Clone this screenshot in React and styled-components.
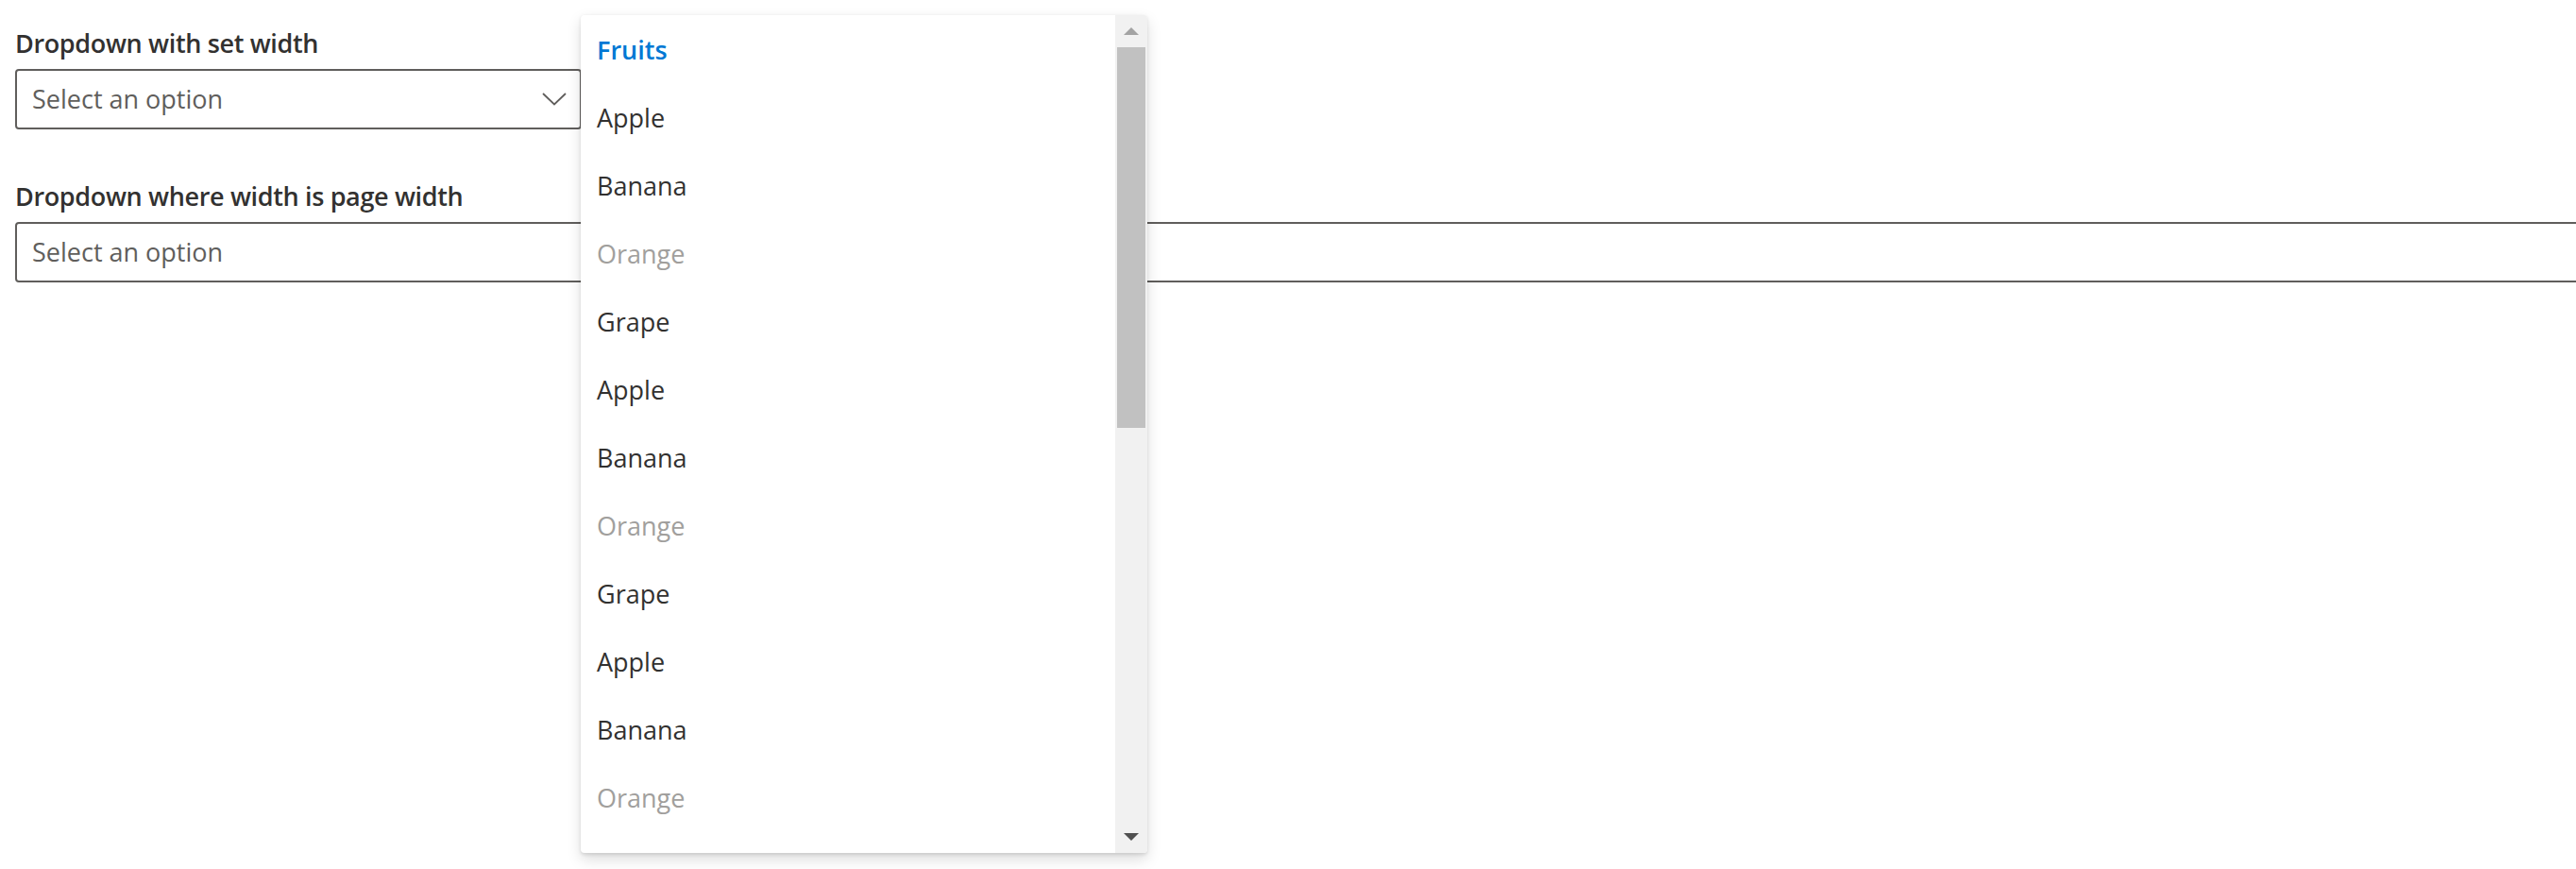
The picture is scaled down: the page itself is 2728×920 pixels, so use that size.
import React from "react";
import styled, { createGlobalStyle } from "styled-components";

const Global = createGlobalStyle`
  html, body { margin: 0; padding: 0; background: #ffffff; overflow: hidden; }
  body { font-family: "Open Sans", "Noto Sans", "Liberation Sans", sans-serif; -webkit-font-smoothing: antialiased; }
`;

const Page = styled.div`
  position: relative;
  width: 2728px;
  height: 920px;
  padding: 16px;
  box-sizing: border-box;
  display: flex;
  flex-direction: column;
  gap: 41px;
  overflow: hidden;
`;

const Field = styled.div`
  display: flex;
  flex-direction: column;
`;

const Label = styled.label`
  font-size: 27px;
  font-weight: 600;
  line-height: 40px;
  letter-spacing: -0.35px;
  color: #323130;
  padding: 10px 0 7px;
`;

const Box = styled.div`
  box-sizing: border-box;
  width: ${(p) => p.$width};
  height: 64px;
  border: 2px solid #605e5c;
  border-radius: 4px;
  display: flex;
  align-items: center;
  padding: 0 14px 0 16px;
  background: #ffffff;
`;

const Placeholder = styled.span`
  flex: 1;
  font-size: 27px;
  color: #605e5c;
  line-height: 40px;
  white-space: nowrap;
`;

const Chevron = styled.svg`
  width: 26px;
  height: 14px;
  flex: none;
`;

const Callout = styled.div`
  position: absolute;
  left: 615px;
  top: 16px;
  width: 600px;
  height: 887px;
  background: #ffffff;
  border-radius: 4px;
  box-shadow: 0 6.4px 14.4px rgba(0, 0, 0, 0.132), 0 1.2px 3.6px rgba(0, 0, 0, 0.108);
  overflow: hidden;
  display: flex;
`;

const List = styled.div`
  flex: 1;
  overflow: hidden;
  display: flex;
  flex-direction: column;
`;

const Item = styled.div`
  flex: none;
  height: 72px;
  display: flex;
  align-items: center;
  padding: 0 17px;
  font-size: 27px;
  font-weight: ${(p) => (p.$header ? 600 : 400)};
  color: ${(p) => (p.$header ? "#0078d4" : p.$disabled ? "#a19f9d" : "#323130")};
  white-space: nowrap;
`;

const Scrollbar = styled.div`
  flex: none;
  width: 34px;
  background: #f1f1f1;
  display: flex;
  flex-direction: column;
`;

const ArrowButton = styled.div`
  flex: none;
  height: 34px;
  display: flex;
  align-items: center;
  justify-content: center;
`;

const Thumb = styled.div`
  flex: none;
  height: 403px;
  margin: 0 2px;
  background: #c1c1c1;
`;

const Spacer = styled.div`
  flex: 1;
`;

const Triangle = ({ up, color }) => (
  <svg width="16" height="8" viewBox="0 0 16 8">
    {up ? <polygon points="0,8 16,8 8,0" fill={color} /> : <polygon points="0,0 16,0 8,8" fill={color} />}
  </svg>
);

const items = [
  { t: "Fruits", header: true },
  { t: "Apple" },
  { t: "Banana" },
  { t: "Orange", disabled: true },
  { t: "Grape" },
  { t: "Apple" },
  { t: "Banana" },
  { t: "Orange", disabled: true },
  { t: "Grape" },
  { t: "Apple" },
  { t: "Banana" },
  { t: "Orange", disabled: true },
];

export default function App() {
  return (
    <>
      <Global />
      <Page>
        <Field>
          <Label>Dropdown with set width</Label>
          <Box $width="600px">
            <Placeholder>Select an option</Placeholder>
            <Chevron viewBox="0 0 26 14">
              <polyline points="1,1 13,12.5 25,1" fill="none" stroke="#605e5c" strokeWidth="1.8" />
            </Chevron>
          </Box>
        </Field>
        <Field>
          <Label>Dropdown where width is page width</Label>
          <Box $width="2740px">
            <Placeholder>Select an option</Placeholder>
          </Box>
        </Field>
        <Callout>
          <List>
            {items.map((it, i) => (
              <Item key={i} $header={it.header} $disabled={it.disabled}>
                {it.t}
              </Item>
            ))}
          </List>
          <Scrollbar>
            <ArrowButton>
              <Triangle up color="#a3a3a3" />
            </ArrowButton>
            <Thumb />
            <Spacer />
            <ArrowButton>
              <Triangle color="#505050" />
            </ArrowButton>
          </Scrollbar>
        </Callout>
      </Page>
    </>
  );
}
